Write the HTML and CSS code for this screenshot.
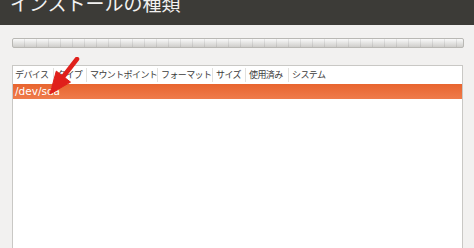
FILE: index.html
```html
<!DOCTYPE html>
<html lang="ja">
<head>
    <meta charset="UTF-8">
    <title>インストールの種類</title>
    <link rel="stylesheet" href="styles.css">
</head>
<body>
    <div class="titlebar">
        <h1>インストールの種類</h1>
    </div>

    <div class="content">
        <div class="progress"></div>

        <div class="partitions">
            <div class="head">
                <span class="col dev">デバイス</span>
                <span class="col type">タイプ</span>
                <span class="col mount">マウントポイント</span>
                <span class="col fmt">フォーマット</span>
                <span class="col size">サイズ</span>
                <span class="col used">使用済み</span>
                <span class="col sys">システム</span>
            </div>
            <div class="row selected">/dev/sda</div>

            <svg class="arrow" width="40" height="44" viewBox="0 0 40 44">
                <path d="M30 2 L16 20" stroke="#e0201b" stroke-width="4.5" stroke-linecap="round" fill="none"/>
                <path d="M3 37 L9.3 14.1 L23.5 25.1 Z" fill="#e0201b" stroke="#e0201b" stroke-width="1" stroke-linejoin="round"/>
            </svg>
        </div>
    </div>
</body>
</html>
```

FILE: styles.css
```css
body {
    margin: 0;
    width: 474px;
    height: 248px;
    overflow: hidden;
    background: #f2f1f0;
    font-family: "Noto Sans CJK JP", "DejaVu Sans", sans-serif;
}
.titlebar {
    height: 25px;
    background: #3c3b37;
    overflow: hidden;
}
.titlebar h1 {
    margin: -11px 0 0 10px;
    font-size: 19px;
    font-weight: normal;
    line-height: 28px;
    color: #f2f1f0;
}
.content {
    padding: 13px 12px 0 12px;
}
.progress {
    width: 450px;
    height: 8px;
    border: 1px solid #b9b8b4;
    border-radius: 2px;
    background:
        repeating-linear-gradient(90deg, transparent 0 11px, rgba(0,0,0,0.08) 11px 12px),
        linear-gradient(#fafafa, #e4e4e2 50%, #cfcecb);
}
.partitions {
    position: relative;
    margin-top: 17px;
    width: 449px;
    height: 190px;
    border: 1px solid #c9c8c5;
    background: #fff;
}
.head {
    display: flex;
    height: 18px;
    align-items: center;
    color: #3c3c3c;
    font-size: 9px;
    letter-spacing: -0.6px;
}
.col {
    box-sizing: border-box;
    flex-shrink: 0;
    padding-left: 3px;
    white-space: nowrap;
    border-right: 1px solid #e2e1de;
    line-height: 14px;
}
.col.dev { width: 41px; padding-left: 2px; }
.col.type { width: 33px; }
.col.mount { width: 71px; }
.col.fmt { width: 55px; }
.col.size { width: 33px; }
.col.used { width: 43px; }
.col.sys { border-right: none; }
.row {
    height: 15px;
    line-height: 15px;
    padding-left: 2px;
    font-family: "DejaVu Sans", sans-serif;
    font-size: 10.5px;
}
.row.selected {
    background: linear-gradient(#e8652f, #ef7b4b);
    color: #fff;
}
.arrow {
    position: absolute;
    left: 34px;
    top: -9px;
}
```
